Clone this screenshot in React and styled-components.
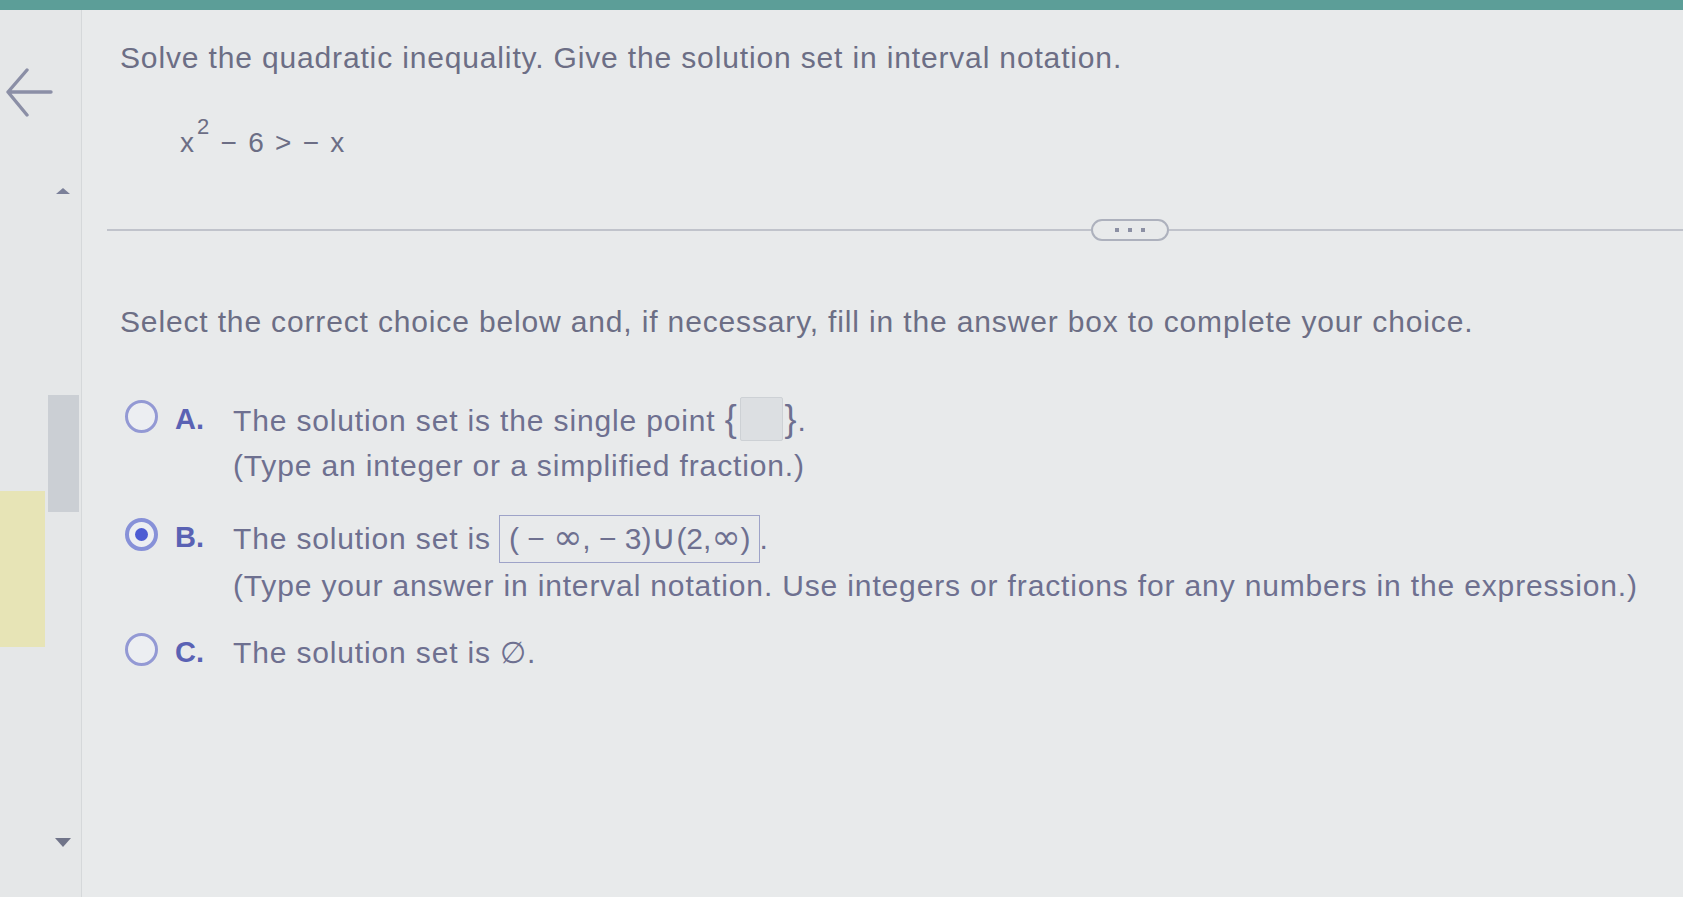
import React from "react";
import styled, { createGlobalStyle } from "styled-components";

const Global = createGlobalStyle`
  html, body { margin: 0; padding: 0; }
  body {
    width: 1683px;
    height: 897px;
    overflow: hidden;
    background: #e8eaeb;
    font-family: "Liberation Sans", Arial, sans-serif;
  }
  #root { height: 100%; }
`;

const Page = styled.div`
  display: flex;
  flex-direction: column;
  height: 897px;
`;

const TopBar = styled.div`
  flex: none;
  height: 10px;
  background: #5c9e98;
`;

const Body = styled.div`
  flex: 1;
  display: flex;
  min-height: 0;
`;

const Sidebar = styled.aside`
  flex: none;
  width: 82px;
  box-sizing: border-box;
  display: flex;
  flex-direction: column;
  background: #e5e7e8;
  border-right: 1px solid #d5d8da;
`;

const BackButton = styled.div`
  flex: none;
  height: 120px;
  box-sizing: border-box;
  padding: 58px 0 0 6px;
`;

const SideBody = styled.div`
  flex: 1;
  display: flex;
`;

const MarkerStrip = styled.div`
  flex: none;
  width: 45px;
  padding-top: 361px;
`;

const Marker = styled.div`
  height: 156px;
  background: #e7e4b6;
`;

const ScrollTrack = styled.div`
  flex: 1;
  display: flex;
  flex-direction: column;
  align-items: center;
  padding: 58px 0 50px;
`;

const Triangle = styled.div`
  width: 0;
  height: 0;
  border-left: ${(p) => p.$half}px solid transparent;
  border-right: ${(p) => p.$half}px solid transparent;
  ${(p) =>
    p.$down
      ? `border-top: ${p.$h}px solid #707489;`
      : `border-bottom: ${p.$h}px solid #7b8099;`}
`;

const Thumb = styled.div`
  width: 31px;
  height: 117px;
  margin-top: 201px;
  background: #cbcfd4;
`;

const Spacer = styled.div`
  flex: 1;
`;

const Main = styled.main`
  flex: 1;
  box-sizing: border-box;
  padding: 32px 0 0 25px;
  color: #6c6e85;
  min-width: 0;
`;

const Section = styled.section`
  padding-left: 13px;
`;

const Title = styled.div`
  font-size: 30px;
  letter-spacing: 0.85px;
  line-height: 32px;
  white-space: nowrap;
`;

const Equation = styled.div`
  margin: 53px 0 0 60px;
  font-size: 28px;
  line-height: 32px;
  word-spacing: 3.5px;
  white-space: nowrap;
`;

const Sup = styled.span`
  font-size: 22px;
  line-height: 0;
  margin-left: 3px;
  vertical-align: 18px;
`;

const Divider = styled.div`
  margin-top: 60px;
  display: flex;
  align-items: center;
  height: 22px;
`;

const Rule = styled.div`
  flex: ${(p) => (p.$fixed ? `0 0 ${p.$fixed}px` : "1")};
  height: 2px;
  background: #c0c3cb;
`;

const Pill = styled.div`
  flex: none;
  width: 78px;
  height: 22px;
  box-sizing: border-box;
  border: 2px solid #adb1bd;
  border-radius: 11px;
  display: flex;
  align-items: center;
  justify-content: center;
  gap: 9px;
`;

const Dot = styled.span`
  width: 4px;
  height: 4px;
  background: #8c90a4;
`;

const Prompt = styled.div`
  margin-top: 65px;
  font-size: 30px;
  letter-spacing: 0.85px;
  line-height: 32px;
  white-space: nowrap;
`;

const Options = styled.div`
  margin-top: 59px;
  display: flex;
  flex-direction: column;
`;

const Option = styled.div`
  display: flex;
  align-items: flex-start;
  margin-top: ${(p) => p.$space || 0}px;
`;

const RadioSlot = styled.div`
  flex: none;
  margin-left: 5px;
  width: 33px;
  height: 45px;
  box-sizing: border-box;
  padding-bottom: 6px;
  display: flex;
  align-items: center;
`;

const Radio = styled.div`
  width: 33px;
  height: 33px;
  box-sizing: border-box;
  border-radius: 50%;
  border: ${(p) => (p.$checked ? "4.5px solid #8791d8" : "3px solid #9399d4")};
  background: #eceef2;
  display: flex;
  align-items: center;
  justify-content: center;
  &::after {
    content: "";
    display: ${(p) => (p.$checked ? "block" : "none")};
    width: 13px;
    height: 13px;
    border-radius: 50%;
    background: #4d5cd3;
  }
`;

const Letter = styled.div`
  flex: none;
  width: 58px;
  margin-left: 17px;
  font-size: 29px;
  line-height: 45px;
  font-weight: bold;
  color: #5a62b4;
`;

const OptionBody = styled.div`
  display: flex;
  flex-direction: column;
`;

const Line = styled.div`
  font-size: 30px;
  letter-spacing: 0.85px;
  line-height: 45px;
  white-space: nowrap;
  color: #6e7090;
`;

const Brace = styled.span`
  font-size: 36px;
  line-height: 0;
`;

const EmptyBox = styled.span`
  display: inline-block;
  width: 43px;
  height: 44px;
  box-sizing: border-box;
  margin: 0 2px;
  vertical-align: -10px;
  background: #dcdfe2;
  border: 1px solid #cdd1d5;
  border-radius: 2px;
`;

const AnswerBox = styled.span`
  display: inline-block;
  margin-left: 8px;
  padding: 7px 8px 7px 9px;
  line-height: 32px;
  letter-spacing: 0;
  border: 1.5px solid #9ea3c8;
`;

const MathSym = styled.span`
  font-family: "DejaVu Sans", sans-serif;
  font-size: ${(p) => p.$size}px;
  line-height: 0;
  letter-spacing: 0;
`;

export default function App() {
  return (
    <>
      <Global />
      <Page>
        <TopBar />
        <Body>
          <Sidebar>
            <BackButton>
              <svg width="48" height="50" viewBox="0 0 48 50" fill="none">
                <path
                  d="M45 24H2M21 2L2 24L21 47"
                  stroke="#8b8fa6"
                  strokeWidth="3.4"
                  strokeLinecap="round"
                  strokeLinejoin="round"
                />
              </svg>
            </BackButton>
            <SideBody>
              <MarkerStrip>
                <Marker />
              </MarkerStrip>
              <ScrollTrack>
                <Triangle $half={7.5} $h={6} />
                <Thumb />
                <Spacer />
                <Triangle $down $half={8.5} $h={9} />
              </ScrollTrack>
            </SideBody>
          </Sidebar>
          <Main>
            <Section>
              <Title>
                Solve the quadratic inequality. Give the solution set in interval notation.
              </Title>
              <Equation>
                x<Sup>2</Sup> − 6 &gt; − x
              </Equation>
            </Section>
            <Divider>
              <Rule />
              <Pill>
                <Dot />
                <Dot />
                <Dot />
              </Pill>
              <Rule $fixed={514} />
            </Divider>
            <Section>
              <Prompt>
                Select the correct choice below and, if necessary, fill in the answer box to complete your choice.
              </Prompt>
              <Options>
                <Option>
                  <RadioSlot>
                    <Radio />
                  </RadioSlot>
                  <Letter>A.</Letter>
                  <OptionBody>
                    <Line>
                      The solution set is the single point <Brace>{"{"}</Brace>
                      <EmptyBox />
                      <Brace>{"}"}</Brace>.
                    </Line>
                    <Line>(Type an integer or a simplified fraction.)</Line>
                  </OptionBody>
                </Option>
                <Option $space={27}>
                  <RadioSlot>
                    <Radio $checked />
                  </RadioSlot>
                  <Letter>B.</Letter>
                  <OptionBody>
                    <Line>
                      The solution set is
                      <AnswerBox>
                        ( − <MathSym $size={35}>∞</MathSym>, − 3)<MathSym $size={34}>∪</MathSym>(2,<MathSym $size={35}>∞</MathSym>)
                      </AnswerBox>
                      .
                    </Line>
                    <Line>
                      (Type your answer in interval notation. Use integers or fractions for any numbers in the expression.)
                    </Line>
                  </OptionBody>
                </Option>
                <Option $space={22}>
                  <RadioSlot>
                    <Radio />
                  </RadioSlot>
                  <Letter>C.</Letter>
                  <OptionBody>
                    <Line>The solution set is ∅.</Line>
                  </OptionBody>
                </Option>
              </Options>
            </Section>
          </Main>
        </Body>
      </Page>
    </>
  );
}
